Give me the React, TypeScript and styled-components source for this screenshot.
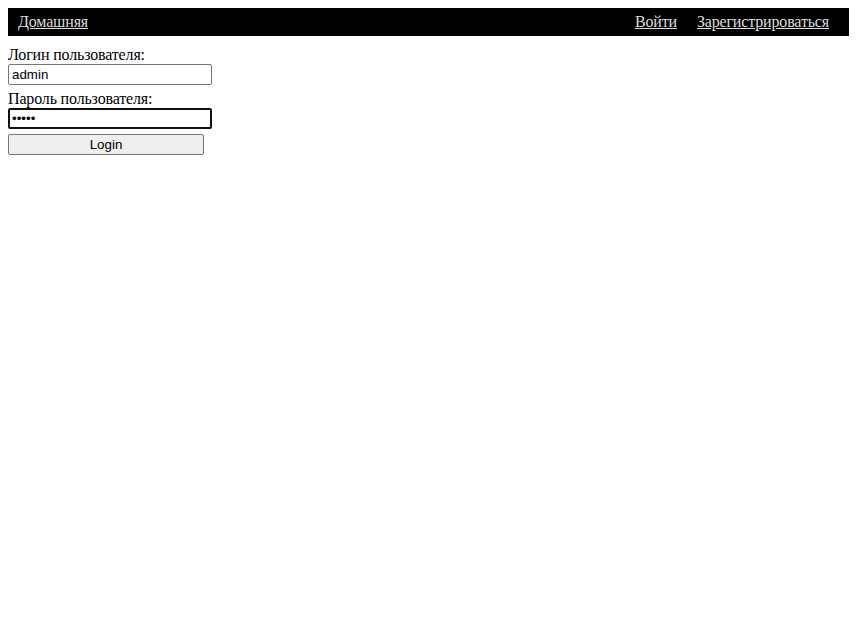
import styled, { createGlobalStyle } from "styled-components";

const GlobalStyle = createGlobalStyle`
  body {
    margin: 8px;
    background: #fff;
    font-family: "Liberation Serif", "Times New Roman", serif;
    font-size: 16px;
    letter-spacing: -0.16px;
    color: #000;
  }
`;

const NavBar = styled.nav`
  display: flex;
  justify-content: space-between;
  align-items: center;
  height: 28px;
  background: #000;
  padding: 0 20px 0 10px;
`;

const NavGroup = styled.div`
  display: flex;
  gap: 20px;
`;

const NavLink = styled.a`
  color: #ddd;
  text-decoration: underline;
  line-height: 18px;
  cursor: pointer;
`;

const Form = styled.form`
  display: flex;
  flex-direction: column;
  align-items: flex-start;
  padding-top: 9px;
`;

const Field = styled.div`
  display: flex;
  flex-direction: column;
  align-items: flex-start;
  margin-bottom: 4px;
`;

const Label = styled.label`
  line-height: 18px;
  padding-top: 1px;
`;

const Input = styled.input`
  box-sizing: border-box;
  width: 204px;
  height: 21px;
  margin: 0;
  padding: 1px 3px;
  border: 1px solid #767676;
  border-radius: 2px;
  font-family: "Liberation Sans", Arial, sans-serif;
  font-size: 13.33px;
  letter-spacing: normal;
  color: #000;
  background: #fff;

  &:focus {
    outline: none;
    border: 2px solid #101010;
    padding: 0 2px;
  }
`;

const SubmitButton = styled.button`
  box-sizing: border-box;
  width: 196px;
  height: 21px;
  margin: 1px 0 0;
  padding: 1px 6px;
  border: 1px solid #767676;
  border-radius: 2px;
  background: #efefef;
  font-family: "Liberation Sans", Arial, sans-serif;
  font-size: 13.33px;
  letter-spacing: normal;
  color: #000;
`;

const App = () => {
  return (
    <>
      <GlobalStyle />
      <NavBar>
        <NavLink>Домашняя</NavLink>
        <NavGroup>
          <NavLink>Войти</NavLink>
          <NavLink>Зарегистрироваться</NavLink>
        </NavGroup>
      </NavBar>
      <Form onSubmit={(e) => e.preventDefault()}>
        <Field>
          <Label htmlFor="login">Логин пользователя:</Label>
          <Input id="login" type="text" defaultValue="admin" />
        </Field>
        <Field>
          <Label htmlFor="password">Пароль пользователя:</Label>
          <Input id="password" type="password" defaultValue="admin" autoFocus />
        </Field>
        <SubmitButton type="submit">Login</SubmitButton>
      </Form>
    </>
  );
};

export default App;
